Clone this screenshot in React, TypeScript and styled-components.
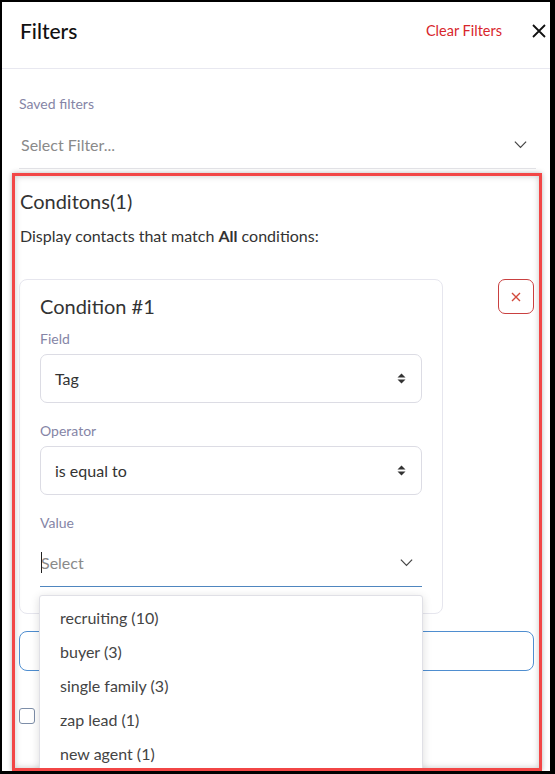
import * as React from 'react';
import styled, { createGlobalStyle } from 'styled-components';

const GlobalStyle = createGlobalStyle`
  html, body {
    margin: 0;
    padding: 0;
    background: #fff;
  }
  body {
    font-family: Lato, "Open Sans", "Liberation Sans", sans-serif;
    color: #333;
  }
  * { box-sizing: border-box; }
`;

const Frame = styled.div`
  width: 555px;
  height: 774px;
  display: flex;
  flex-direction: column;
  background: #fff;
  border-style: solid;
  border-color: #000;
  border-width: 2px 5px 3px 2px;
  overflow: hidden;
`;

const Header = styled.header`
  height: 67px;
  flex: none;
  display: flex;
  align-items: center;
  padding: 0 3px 9px 18px;
  border-bottom: 1px solid #e8e8f0;
`;

const Title = styled.h1`
  margin: 0;
  flex: 1;
  font-size: 21px;
  font-weight: 500;
  color: #111;
`;

const ClearLink = styled.button`
  border: none;
  background: none;
  padding: 0;
  font-family: inherit;
  font-size: 14.5px;
  color: #d8262c;
  margin-right: 29px;
  cursor: pointer;
`;

const CloseButton = styled.button`
  border: none;
  background: none;
  padding: 0;
  width: 16px;
  height: 16px;
  display: flex;
  align-items: center;
  justify-content: center;
  cursor: pointer;
`;

const Saved = styled.div`
  flex: none;
  padding: 27px 14px 0 17px;
`;

const Label = styled.div`
  font-size: 14px;
  line-height: 16px;
  color: #8585a6;
`;

const FilterSelect = styled.div`
  height: 57px;
  display: flex;
  align-items: center;
  padding: 8px 8px 0 2px;
  border-bottom: 1px solid #e4e4e8;
  font-size: 16px;
  color: #8a8a8a;
  justify-content: space-between;
`;

const Highlight = styled.section`
  flex: 1;
  margin: 4px 8px 0 10px;
  border: 3px solid #f24646;
  padding: 13px 5px 0 4px;
  box-shadow: 0 0 5px rgba(0, 0, 0, 0.28), inset 0 0 6px rgba(0, 0, 0, 0.22);
  overflow: hidden;
`;

const SectionTitle = styled.h2`
  margin: 0;
  font-size: 20px;
  line-height: 24px;
  font-weight: 400;
  color: #333;
  padding-left: 1px;
`;

const Intro = styled.p`
  margin: 13px 0 0 1px;
  font-size: 16px;
  line-height: 20px;
  color: #333;
`;

const ConditionRow = styled.div`
  display: flex;
  align-items: flex-start;
  justify-content: space-between;
  margin-top: 33px;
`;

const Card = styled.div`
  width: 424px;
  border: 1px solid #e6e6ee;
  border-radius: 8px;
  padding: 14px 20px 26px 20px;
`;

const CardTitle = styled.h3`
  margin: 0 0 13px;
  font-size: 20px;
  line-height: 24px;
  font-weight: 400;
  color: #333;
`;

const FieldLabel = styled(Label)<{ $gap?: number }>`
  margin-top: ${(p) => p.$gap ?? 0}px;
  margin-bottom: 7px;
`;

const BoxSelect = styled.div`
  height: 49px;
  border: 1px solid #dcdce4;
  border-radius: 7px;
  display: flex;
  align-items: center;
  justify-content: space-between;
  padding: 0 15px 0 14px;
  font-size: 16px;
  color: #333;
`;

const ValueField = styled.div`
  position: relative;
`;

const LineSelect = styled.div`
  height: 49px;
  border-bottom: 1px solid #4f86bf;
  display: flex;
  align-items: center;
  justify-content: space-between;
  padding: 0 8px 0 1px;
  font-size: 16px;
  color: #8a8a8a;
`;

const Placeholder = styled.span`
  position: relative;
  &::before {
    content: '';
    position: absolute;
    left: 0;
    top: -1px;
    bottom: -1px;
    width: 1px;
    background: #222;
  }
`;

const Menu = styled.ul`
  position: absolute;
  left: -1px;
  right: -1px;
  top: calc(100% + 8px);
  margin: 0;
  padding: 4px 0 0;
  list-style: none;
  background: #fff;
  border: 1px solid #e0e0e6;
  border-radius: 3px;
  box-shadow: 0 2px 10px rgba(0, 0, 0, 0.14);
  z-index: 2;
`;

const MenuItem = styled.li`
  height: 34px;
  display: flex;
  align-items: center;
  padding-left: 20px;
  font-size: 16px;
  color: #444;
`;

const RemoveButton = styled.button`
  width: 36px;
  height: 35px;
  border: 1px solid #c94040;
  border-radius: 7px;
  background: #fff;
  display: flex;
  align-items: center;
  justify-content: center;
  padding: 0;
  cursor: pointer;
`;

const AddButton = styled.button`
  display: block;
  width: 100%;
  height: 40px;
  margin-top: 17px;
  border: 1px solid #4f8ed0;
  border-radius: 8px;
  background: #fff;
  font-family: inherit;
  font-size: 16px;
  color: #4f8ed0;
`;

const CheckRow = styled.label`
  display: flex;
  align-items: center;
  gap: 10px;
  margin-top: 35px;
  font-size: 16px;
  color: #333;
`;

const Box = styled.span`
  width: 16px;
  height: 16px;
  border: 1px solid #7d8ea8;
  border-radius: 3px;
  background: #fff;
`;

const Chevron = ({ size = 15 }: { size?: number }) => (
  <svg width={size} height={size} viewBox="0 0 16 16" fill="none">
    <path d="M2 5l6 6 6-6" stroke="#444" strokeWidth="1.3" />
  </svg>
);

const Updown = () => (
  <svg width="9" height="11" viewBox="0 0 9 11">
    <path d="M4.5 0.5L8.5 4.5H0.5Z" fill="#333" />
    <path d="M4.5 10.5L8.5 6.5H0.5Z" fill="#333" />
  </svg>
);

const options = ['recruiting (10)', 'buyer (3)', 'single family (3)', 'zap lead (1)', 'new agent (1)'];

export default function App() {
  return (
    <>
      <GlobalStyle />
      <Frame>
        <Header>
          <Title>Filters</Title>
          <ClearLink>Clear Filters</ClearLink>
          <CloseButton aria-label="Close">
            <svg width="14" height="14" viewBox="0 0 14 14">
              <path d="M1 1l12 12M13 1L1 13" stroke="#111" strokeWidth="1.8" />
            </svg>
          </CloseButton>
        </Header>

        <Saved>
          <Label>Saved filters</Label>
          <FilterSelect>
            <span>Select Filter...</span>
            <Chevron />
          </FilterSelect>
        </Saved>

        <Highlight>
          <SectionTitle>Conditons(1)</SectionTitle>
          <Intro>
            Display contacts that match <b>All</b> conditions:
          </Intro>

          <ConditionRow>
            <Card>
              <CardTitle>Condition #1</CardTitle>
              <FieldLabel>Field</FieldLabel>
              <BoxSelect>
                <span>Tag</span>
                <Updown />
              </BoxSelect>
              <FieldLabel $gap={20}>Operator</FieldLabel>
              <BoxSelect>
                <span>is equal to</span>
                <Updown />
              </BoxSelect>
              <FieldLabel $gap={20}>Value</FieldLabel>
              <ValueField>
                <LineSelect>
                  <Placeholder>Select</Placeholder>
                  <Chevron />
                </LineSelect>
                <Menu>
                  {options.map((o) => (
                    <MenuItem key={o}>{o}</MenuItem>
                  ))}
                </Menu>
              </ValueField>
            </Card>
            <RemoveButton aria-label="Remove condition">
              <svg width="10" height="10" viewBox="0 0 10 10">
                <path d="M1 1l8 8M9 1L1 9" stroke="#d24a3c" strokeWidth="1.4" />
              </svg>
            </RemoveButton>
          </ConditionRow>

          <AddButton>+ Add Condition</AddButton>
          <CheckRow>
            <Box />
            Save this filter
          </CheckRow>
        </Highlight>
      </Frame>
    </>
  );
}
